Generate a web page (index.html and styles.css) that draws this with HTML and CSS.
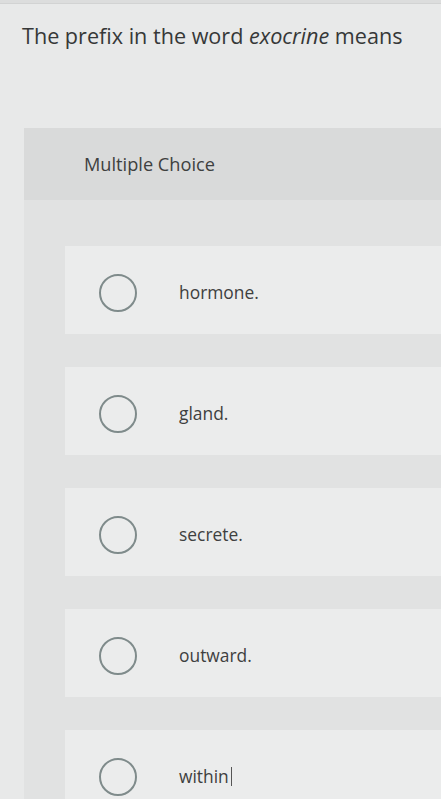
FILE: index.html
```html
<!DOCTYPE html>
<html lang="en">
<head>
<meta charset="utf-8">
<title>Multiple Choice</title>
<link rel="stylesheet" href="styles.css">
</head>
<body>
<div class="topline"></div>
<h1 class="question">The prefix in the word <em>exocrine</em> means</h1>
<section class="panel">
  <div class="panel-head">Multiple Choice</div>
  <div class="panel-body">
    <label class="card"><span class="radio"></span><span class="label">hormone.</span></label>
    <label class="card"><span class="radio"></span><span class="label">gland.</span></label>
    <label class="card"><span class="radio"></span><span class="label">secrete.</span></label>
    <label class="card"><span class="radio"></span><span class="label">outward.</span></label>
    <label class="card"><span class="radio"></span><span class="label">within<span class="caret"></span></span></label>
  </div>
</section>
</body>
</html>
```
FILE: styles.css
```css
html, body {
  margin: 0;
  padding: 0;
  height: 100%;
  overflow: hidden;
}
body {
  background: #e8e9e9;
  font-family: "Open Sans", "Liberation Sans", sans-serif;
  color: #3b3d3d;
}
.topline {
  height: 3px;
  background: #dcdddd;
  border-bottom: 1px solid #d2d3d3;
}
.question {
  margin: 0;
  padding: 19px 0 0 22px;
  height: 102px;
  box-sizing: border-box;
  font-size: 21.6px;
  font-weight: 500;
  line-height: 26px;
  color: #363838;
  white-space: nowrap;
}
.question em {
  font-style: italic;
}
.panel {
  margin: 22px 0 0 24px;
  background: #e1e2e2;
  height: 700px;
}
.panel-head {
  height: 72px;
  background: #d9dada;
  display: flex;
  align-items: center;
  padding-left: 60px;
  font-size: 18.2px;
  font-weight: 500;
  color: #3e4040;
}
.panel-body {
  display: flex;
  flex-direction: column;
  gap: 33px;
  padding: 46px 0 0 41px;
}
.card {
  height: 88px;
  background: #ebecec;
  display: flex;
  align-items: center;
  padding-left: 34px;
}
.radio {
  width: 34px;
  height: 34px;
  border: 2.5px solid #7f8b8b;
  border-radius: 50%;
  flex: none;
  margin-top: 6px;
}
.label {
  margin-left: 42px;
  margin-top: 4px;
  font-size: 17.4px;
  font-weight: 500;
  color: #3e4040;
  display: flex;
  align-items: center;
}
.caret {
  display: inline-block;
  width: 1.5px;
  height: 19px;
  background: #555;
  margin-left: 2px;
}
```
